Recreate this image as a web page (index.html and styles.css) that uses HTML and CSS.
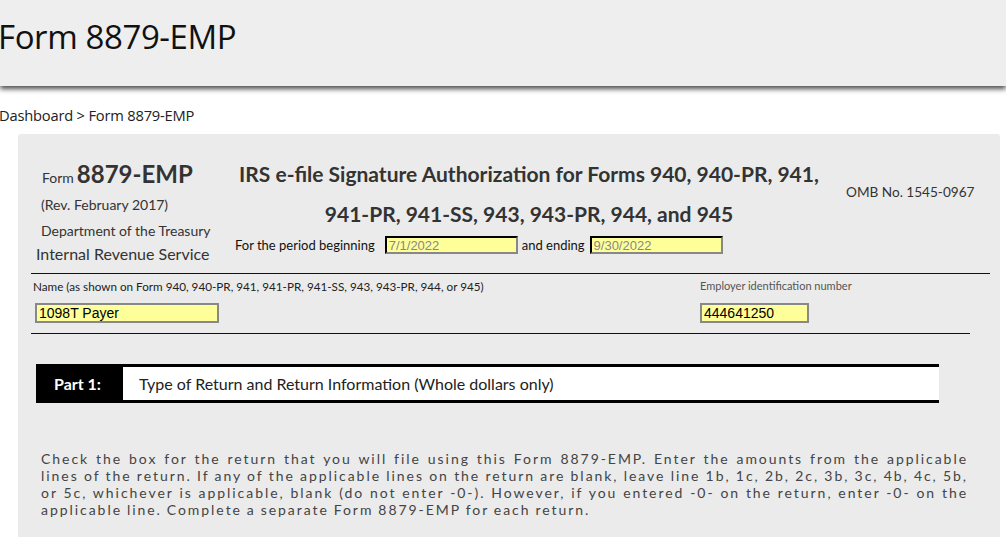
FILE: index.html
```html
<!DOCTYPE html>
<html>
<head>
<meta charset="utf-8">
<link rel="stylesheet" href="styles.css">
</head>
<body>
<header class="topbar">
  <h1 class="page-title">Form 8879-EMP</h1>
</header>
<nav class="crumbs">Dashboard &gt; Form 8879-EMP</nav>
<main class="panel">
  <section class="form-head">
    <div class="head-left">
      <div class="form-id"><span class="form-word">Form</span><span class="form-num">8879-EMP</span></div>
      <div class="rev">(Rev. February 2017)</div>
      <div class="dept">Department of the Treasury</div>
      <div class="irs">Internal Revenue Service</div>
    </div>
    <div class="head-center">
      <div class="title">IRS e-file Signature Authorization for Forms 940, 940-PR, 941,</div>
      <div class="title">941-PR, 941-SS, 943, 943-PR, 944, and 945</div>
      <div class="period">
        <span class="period-lbl">For the period beginning</span>
        <input class="date-in" value="7/1/2022" readonly>
        <span class="period-and">and ending</span>
        <input class="date-in" value="9/30/2022" readonly>
      </div>
    </div>
    <div class="head-right">OMB No. 1545-0967</div>
  </section>
  <hr class="rule rule-a">
  <section class="ident">
    <div class="field name-field">
      <label class="lbl lbl-name">Name (as shown on Form 940, 940-PR, 941, 941-PR, 941-SS, 943, 943-PR, 944, or 945)</label>
      <input class="txt-in name-in" value="1098T Payer" readonly>
    </div>
    <div class="field ein-field">
      <label class="lbl lbl-gray">Employer identification number</label>
      <input class="txt-in ein-in" value="444641250" readonly>
    </div>
  </section>
  <hr class="rule rule-b">
  <div class="part-bar">
    <div class="part-label">Part 1:</div>
    <div class="part-title">Type of Return and Return Information (Whole dollars only)</div>
  </div>
  <p class="instructions">Check the box for the return that you will file using this Form 8879-EMP. Enter the amounts from the applicable lines of the return. If any of the applicable lines on the return are blank, leave line 1b, 1c, 2b, 2c, 3b, 3c, 4b, 4c, 5b, or 5c, whichever is applicable, blank (do not enter -0-). However, if you entered -0- on the return, enter -0- on the applicable line. Complete a separate Form 8879-EMP for each return.</p>
</main>
</body>
</html>
```
FILE: styles.css
```css
html, body {
  margin: 0;
  padding: 0;
  background: #ffffff;
  height: 100%;
  overflow: hidden;
}
body {
  font-family: "Open Sans", sans-serif;
  color: #111;
}
.topbar {
  height: 86px;
  background: #eeeeee;
  box-shadow: 0 3px 5px rgba(0, 0, 0, 0.7);
  position: relative;
  z-index: 1;
}
.page-title {
  margin: 0;
  padding-top: 16px;
  font-family: "Open Sans", sans-serif;
  font-weight: 400;
  font-size: 33px;
  line-height: 42px;
  color: #111;
  margin-left: -2px;
  letter-spacing: -0.4px;
}
.crumbs {
  font-family: "Open Sans", sans-serif;
  font-size: 14.7px;
  line-height: 20px;
  margin-top: 19px;
  margin-left: -1px;
  color: #222;
  letter-spacing: -0.2px;
}
.panel {
  margin: 9px 6px 0 18px;
  background: #ebebeb;
  border-radius: 3px 3px 0 0;
  min-height: 420px;
  padding: 1px 0 0 0;
  font-family: Lato, sans-serif;
  color: #333;
}
.form-head {
  display: grid;
  grid-template-columns: 212px 1fr 154px;
  margin-top: 24px;
}
.head-left {
  padding-left: 18px;
}
.form-id {
  padding-left: 6px;
  height: 28px;
  display: flex;
  align-items: baseline;
}
.form-word {
  font-size: 14px;
  margin-right: 3px;
}
.form-num {
  font-size: 24px;
  font-weight: 700;
}
.rev {
  font-size: 14px;
  padding-left: 5px;
  margin-top: 10px;
  line-height: 16px;
}
.dept {
  font-size: 14px;
  padding-left: 5px;
  margin-top: 10px;
  line-height: 16px;
}
.irs {
  font-size: 16px;
  margin-top: 6px;
  line-height: 18px;
}
.head-center {
  padding-left: 5px;
}
.title {
  font-size: 21px;
  font-weight: 700;
  text-align: center;
  line-height: 40px;
  color: #333;
  margin-right: 23px;
}
.title:first-child {
  margin-top: -5px;
}
.period {
  display: flex;
  align-items: center;
  font-size: 13px;
  color: #111;
  margin-top: 2px;
}
.period-lbl {
  margin-right: 10px;
}
.period-and {
  margin: 0 5px 0 4px;
}
.date-in {
  width: 125px;
  height: 14px;
  padding: 0 2px;
  border: 2px inset #555;
  border-color: #333 #888 #888 #333;
  background: #ffff99;
  font-family: "Liberation Sans", Arial, sans-serif;
  font-size: 13px;
  color: #888;
}
.head-right {
  font-size: 13.6px;
  padding-top: 25px;
  color: #333;
}
.rule {
  border: 0;
  border-top: 1px solid #111;
  margin: 0;
}
.rule-a {
  margin: 10px 10px 0 13px;
}
.rule-b {
  margin: 10px 30px 0 13px;
}
.ident {
  display: flex;
  padding-left: 15px;
}
.field {
  display: flex;
  flex-direction: column;
  align-items: flex-start;
}
.name-field {
  width: 667px;
}
.lbl {
  font-size: 11px;
  line-height: 14px;
  margin-top: 5px;
  color: #222;
}
.lbl-name {
  font-size: 11.7px;
}
.lbl-gray {
  color: #555;
}
.txt-in {
  margin-top: 10px;
  height: 16px;
  padding: 0 2px;
  border: 2px solid #888;
  background: #ffff99;
  font-family: "Liberation Sans", Arial, sans-serif;
  font-size: 14px;
  color: #000;
}
.name-in {
  width: 176px;
  margin-left: 2px;
}
.ein-in {
  width: 101px;
}
.part-bar {
  display: flex;
  margin: 30px 0 0 18px;
  width: 903px;
  height: 33px;
  border-top: 3px solid #000;
  border-bottom: 3px solid #000;
  background: #ffffff;
}
.part-label {
  width: 87px;
  background: #000;
  color: #fff;
  font-size: 16px;
  font-weight: 700;
  line-height: 33px;
  text-align: center;
  box-sizing: border-box;
  padding-right: 4px;
}
.part-title {
  font-size: 16px;
  line-height: 33px;
  padding-left: 16px;
  color: #222;
}
.instructions {
  margin: 47px 32px 0 23px;
  font-size: 14px;
  line-height: 17px;
  letter-spacing: 1.95px;
  word-spacing: -0.6px;
  text-align: justify;
  color: #444;
}
```
